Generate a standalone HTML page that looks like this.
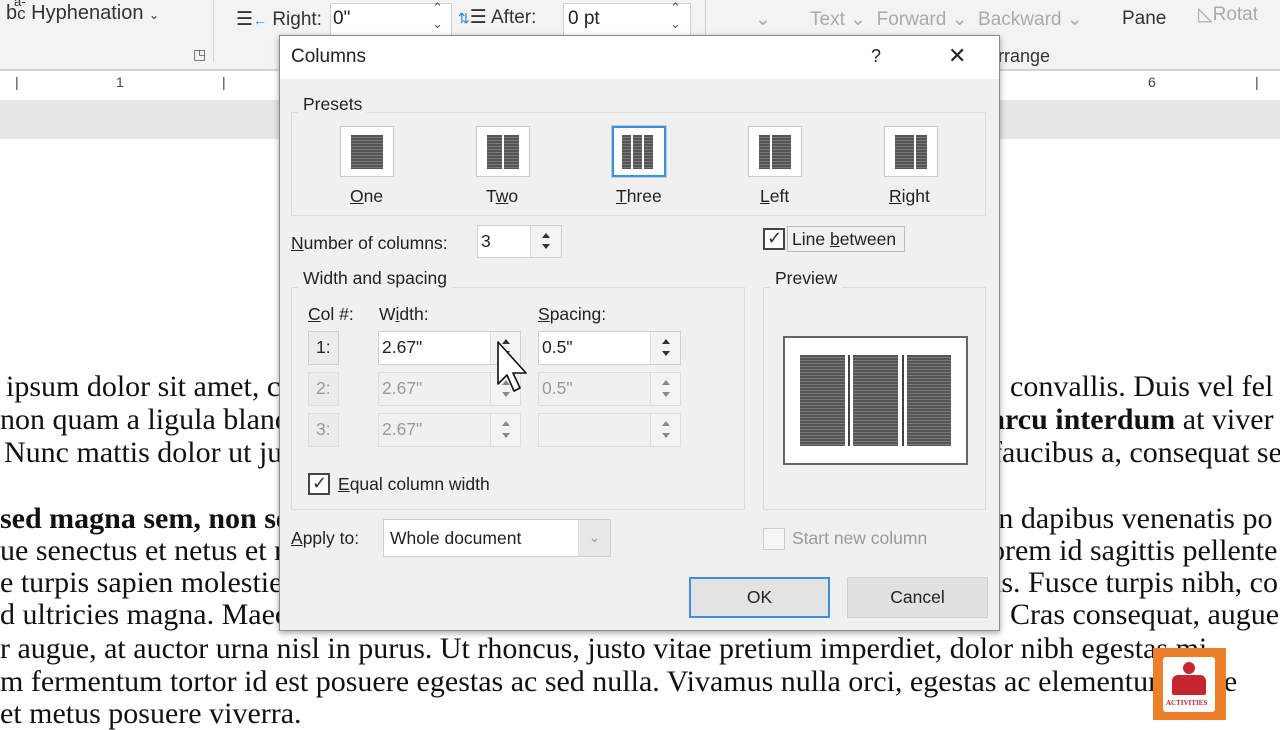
<!DOCTYPE html>
<html><head><meta charset="utf-8"><style>
*{box-sizing:border-box;margin:0;padding:0}
body{width:1280px;height:720px;overflow:hidden;position:relative;background:#fff;font-family:"Liberation Sans",sans-serif}
.a{position:absolute;white-space:nowrap}
.doc{font-family:"Liberation Serif",serif;font-size:30px;color:#111;line-height:30px}
.ui{font-size:17.5px;color:#222}
.g{color:#999}
.stripe{background:repeating-linear-gradient(#555 0 2px,#7a7a7a 2px 3px)}
.pbox{position:absolute;top:126px;width:54px;height:51px;background:#fff;border:1px solid #c8c8c8}
.inp{position:absolute;background:#fff;border:1px solid #cfcfcf}
.spin{position:absolute;top:0;bottom:0;right:0;width:30px;background:#f3f3f3;border-left:1px solid #ddd}
.spin:before{content:"";position:absolute;left:11px;top:7px;border:4px solid transparent;border-bottom:5px solid #333;border-top:0}
.spin:after{content:"";position:absolute;left:11px;bottom:8px;border:4px solid transparent;border-top:5px solid #333;border-bottom:0}
.dis .spin:before{border-bottom-color:#888}.dis .spin:after{border-top-color:#888}
.dis{background:#f0f0f0;border-color:#ddd}
.btn{position:absolute;background:#e5e5e5;border:1px solid #cfcfcf;text-align:center}
.cb{position:absolute;width:22px;height:22px;border:2px solid #444;background:#fff}
.grp{position:absolute;border:1px solid #dcdcdc}
u{text-decoration:underline}
</style></head><body>
<!-- ribbon -->
<div class="a" style="left:0;top:0;width:1280px;height:71px;background:#f3f3f3;border-bottom:2px solid #d4d4d4"></div>
<div class="a ui" style="left:6px;top:0;font-size:20px;color:#333;line-height:26px">b<span style="font-size:17px">c</span>&nbsp;Hyphenation <span style="font-size:12px">⌄</span></div>
<div class="a" style="left:14px;top:-6px;font-size:13px;color:#333">a-</div>
<div class="a" style="left:213px;top:0;width:1px;height:62px;background:#d0d0d0"></div>
<div class="a" style="left:193px;top:46px;font-size:14px;color:#555">◳</div>
<div class="a ui" style="left:236px;top:8px;font-size:19px;color:#333">☰<span style="color:#2a8ad4;font-size:14px">←</span> Right:</div>
<div class="a" style="left:330px;top:3px;width:122px;height:33px;background:#fff;border:1px solid #d0d0d0"></div>
<div class="a ui" style="left:333px;top:8px;font-size:19px">0"</div>
<div class="a" style="left:432px;top:0;color:#555;font-size:13px">⌃<br>⌄</div>
<div class="a ui" style="left:458px;top:6px;font-size:19px;color:#333"><span style="color:#2a8ad4;font-size:14px">⇅</span>☰ After:</div>
<div class="a" style="left:563px;top:3px;width:128px;height:33px;background:#fff;border:1px solid #d0d0d0"></div>
<div class="a ui" style="left:568px;top:8px;font-size:19px">0 pt</div>
<div class="a" style="left:670px;top:0;color:#555;font-size:13px">⌃<br>⌄</div>
<div class="a" style="left:705px;top:0;width:1px;height:62px;background:#d0d0d0"></div>
<div class="a ui" style="left:755px;top:8px;font-size:19px;color:#aaa">⌄</div>
<div class="a ui" style="left:810px;top:8px;font-size:19px;color:#aaa">Text ⌄ &nbsp;Forward ⌄ &nbsp;Backward ⌄</div>
<div class="a ui" style="left:1122px;top:8px;font-size:19px;color:#333">Pane</div>
<div class="a ui" style="left:1198px;top:3px;font-size:19px;color:#aaa">◺Rotat</div>
<div class="a ui" style="left:998px;top:46px;font-size:18px;color:#333">rrange</div>
<!-- ruler -->
<div class="a" style="left:0;top:73px;width:1280px;height:27px;background:#fff"></div>
<div class="a" style="left:0;top:74px;font-size:14px;color:#444">
<span class="a" style="left:15px">|</span><span class="a" style="left:116px">1</span><span class="a" style="left:222px">|</span>
<span class="a" style="left:1148px">6</span><span class="a" style="left:1255px">|</span></div>
<div class="a" style="left:0;top:100px;width:1280px;height:39px;background:#e6e6e6"></div>
<!-- document text -->
<div class="a doc" style="left:6px;top:372px">ipsum dolor sit amet, consectetur</div>
<div class="a doc" style="left:0;top:405px">non quam a ligula blandit</div>
<div class="a doc" style="left:4px;top:438px">Nunc mattis dolor ut justo</div>
<div class="a doc" style="left:0;top:504px"><b>sed magna sem, non sem</b></div>
<div class="a doc" style="left:0;top:536px">ue senectus et netus et malesuada</div>
<div class="a doc" style="left:0;top:568px">e turpis sapien molestie</div>
<div class="a doc" style="left:0;top:600px">d ultricies magna. Maecenas</div>
<div class="a doc" style="left:0;top:634px">r augue, at auctor urna nisl in purus. Ut rhoncus, justo vitae pretium imperdiet, dolor nibh egestas mi,</div>
<div class="a doc" style="left:0;top:667px">m fermentum tortor id est posuere egestas ac sed nulla. Vivamus nulla orci, egestas ac elementum vitae</div>
<div class="a doc" style="left:0;top:699px">et metus posuere viverra.</div>
<div class="a doc" style="left:1010px;top:372px">convallis. Duis vel fel</div>
<div class="a doc" style="left:990px;top:405px"><b>arcu interdum</b> at viver</div>
<div class="a doc" style="left:992px;top:438px">faucibus a, consequat se</div>
<div class="a doc" style="left:990px;top:504px">in dapibus venenatis po</div>
<div class="a doc" style="left:990px;top:536px">orem id sagittis pellente</div>
<div class="a doc" style="left:993px;top:568px">is. Fusce turpis nibh, co</div>
<div class="a doc" style="left:1010px;top:600px">Cras consequat, augue</div>
<!-- dialog -->
<div class="a" style="left:279px;top:35px;width:721px;height:596px;background:#f0f0f0;border:1px solid #8a8a8a;box-shadow:0 2px 6px rgba(0,0,0,.35)"></div>
<div class="a" style="left:280px;top:36px;width:719px;height:43px;background:#fff"></div>
<div class="a ui" style="left:291px;top:46px;font-size:19px">Columns</div>
<div class="a ui" style="left:871px;top:46px;font-size:18px">?</div>
<div class="a ui" style="left:948px;top:43px;font-size:22px">✕</div>
<!-- presets -->
<div class="grp" style="left:291px;top:112px;width:695px;height:104px"></div>
<div class="a ui" style="left:298px;top:94px;background:#f0f0f0;padding:0 5px">Presets</div>
<div class="pbox" style="left:340px"><div class="a stripe" style="left:10px;top:8px;width:32px;height:34px"></div></div>
<div class="pbox" style="left:476px"><div class="a stripe" style="left:10px;top:8px;width:15px;height:34px"></div><div class="a stripe" style="left:27px;top:8px;width:15px;height:34px"></div></div>
<div class="pbox" style="left:612px;border:2px solid #3d8fe0;box-shadow:0 0 0 1px #bcd"><div class="a stripe" style="left:8px;top:7px;width:9px;height:34px"></div><div class="a stripe" style="left:19px;top:7px;width:9px;height:34px"></div><div class="a stripe" style="left:30px;top:7px;width:9px;height:34px"></div></div>
<div class="pbox" style="left:748px"><div class="a stripe" style="left:10px;top:8px;width:11px;height:34px"></div><div class="a stripe" style="left:23px;top:8px;width:19px;height:34px"></div></div>
<div class="pbox" style="left:884px"><div class="a stripe" style="left:10px;top:8px;width:19px;height:34px"></div><div class="a stripe" style="left:31px;top:8px;width:11px;height:34px"></div></div>
<div class="a ui" style="left:350px;top:186px"><u>O</u>ne</div>
<div class="a ui" style="left:486px;top:186px">T<u>w</u>o</div>
<div class="a ui" style="left:616px;top:186px"><u>T</u>hree</div>
<div class="a ui" style="left:760px;top:186px"><u>L</u>eft</div>
<div class="a ui" style="left:889px;top:186px"><u>R</u>ight</div>
<!-- number of columns -->
<div class="a ui" style="left:291px;top:233px"><u>N</u>umber of columns:</div>
<div class="inp" style="left:477px;top:225px;width:85px;height:33px"><div class="spin" style="width:31px"></div></div>
<div class="a ui" style="left:481px;top:231px">3</div>
<div class="cb" style="left:763px;top:228px"></div>
<div class="a" style="left:767px;top:228px;font-size:18px;color:#333">✓</div>
<div class="a" style="left:787px;top:226px;width:118px;height:26px;border:1px solid #bbb"></div>
<div class="a ui" style="left:792px;top:229px">Line <u>b</u>etween</div>
<!-- width spacing -->
<div class="grp" style="left:291px;top:287px;width:454px;height:223px"></div>
<div class="a ui" style="left:298px;top:268px;background:#f0f0f0;padding:0 5px">Width and spacing</div>
<div class="grp" style="left:763px;top:287px;width:223px;height:223px"></div>
<div class="a ui" style="left:770px;top:268px;background:#f0f0f0;padding:0 5px">Preview</div>
<div class="a ui" style="left:308px;top:304px"><u>C</u>ol #:</div>
<div class="a ui" style="left:379px;top:304px">W<u>i</u>dth:</div>
<div class="a ui" style="left:538px;top:304px"><u>S</u>pacing:</div>
<div class="btn" style="left:308px;top:331px;width:31px;height:34px;background:#ececec"></div><div class="a ui" style="left:316px;top:337px">1:</div>
<div class="btn" style="left:308px;top:372px;width:31px;height:34px;background:#ececec;border-color:#ddd"></div><div class="a ui g" style="left:316px;top:378px">2:</div>
<div class="btn" style="left:308px;top:413px;width:31px;height:34px;background:#ececec;border-color:#ddd"></div><div class="a ui g" style="left:316px;top:419px">3:</div>
<div class="inp" style="left:378px;top:331px;width:143px;height:34px"><div class="spin"></div></div><div class="a ui" style="left:382px;top:337px">2.67"</div>
<div class="inp dis" style="left:378px;top:372px;width:143px;height:34px"><div class="spin"></div></div><div class="a ui g" style="left:382px;top:378px">2.67"</div>
<div class="inp dis" style="left:378px;top:413px;width:143px;height:34px"><div class="spin"></div></div><div class="a ui g" style="left:382px;top:419px">2.67"</div>
<div class="inp" style="left:538px;top:331px;width:143px;height:34px"><div class="spin"></div></div><div class="a ui" style="left:542px;top:337px">0.5"</div>
<div class="inp dis" style="left:538px;top:372px;width:143px;height:34px"><div class="spin"></div></div><div class="a ui g" style="left:542px;top:378px">0.5"</div>
<div class="inp dis" style="left:538px;top:413px;width:143px;height:34px"><div class="spin"></div></div>
<!-- cursor -->
<svg class="a" style="left:494px;top:340px" width="40" height="60" viewBox="0 0 40 60"><path d="M4 2 L4 44 L13 35 L20 51 L26 48 L19 33 L32 33 Z" fill="#fff" stroke="#111" stroke-width="1.6" stroke-linejoin="round"/></svg>
<div class="cb" style="left:308px;top:473px"></div>
<div class="a" style="left:312px;top:473px;font-size:18px;color:#333">✓</div>
<div class="a ui" style="left:338px;top:474px"><u>E</u>qual column width</div>
<!-- preview -->
<div class="a" style="left:783px;top:336px;width:185px;height:129px;background:#fff;border:2px solid #666"></div>
<div class="a stripe" style="left:800px;top:355px;width:45px;height:91px"></div>
<div class="a stripe" style="left:853px;top:355px;width:45px;height:91px"></div>
<div class="a stripe" style="left:907px;top:355px;width:44px;height:91px"></div>
<div class="a" style="left:848px;top:355px;width:2px;height:91px;background:#444"></div>
<div class="a" style="left:902px;top:355px;width:2px;height:91px;background:#444"></div>
<!-- apply to -->
<div class="a ui" style="left:291px;top:528px"><u>A</u>pply to:</div>
<div class="inp" style="left:383px;top:519px;width:228px;height:38px"><div class="a" style="right:0;top:0;bottom:0;width:32px;background:#e8e8e8;border-left:1px solid #ddd;color:#999;text-align:center;line-height:34px;font-size:14px">⌄</div></div>
<div class="a ui" style="left:390px;top:528px">Whole document</div>
<div class="a" style="left:763px;top:528px;width:22px;height:22px;border:1px solid #ccc;background:#f6f6f6"></div>
<div class="a ui g" style="left:792px;top:528px">Start new column</div>
<div class="btn" style="left:689px;top:577px;width:141px;height:41px;border:2px solid #3d8fe0;background:#e3e3e3;line-height:37px;font-size:17.5px;color:#222">OK</div>
<div class="btn" style="left:847px;top:577px;width:141px;height:41px;background:#e1e1e1;line-height:39px;font-size:17.5px;color:#222">Cancel</div>
<!-- logo -->
<div class="a" style="left:1153px;top:648px;width:73px;height:72px;background:#ee7f2a"></div>
<div class="a" style="left:1163px;top:657px;width:52px;height:55px;background:#fff;border-radius:3px"></div>
<div class="a" style="left:1183px;top:662px;width:12px;height:12px;border-radius:50%;background:#c5252c"></div>
<div class="a" style="left:1172px;top:675px;width:34px;height:20px;background:#c5252c;border-radius:6px 6px 2px 2px"></div>
<div class="a" style="left:1166px;top:699px;font-size:7px;font-weight:bold;color:#c5252c;font-family:'Liberation Serif',serif">ACTIVITIES</div>
</body></html>
